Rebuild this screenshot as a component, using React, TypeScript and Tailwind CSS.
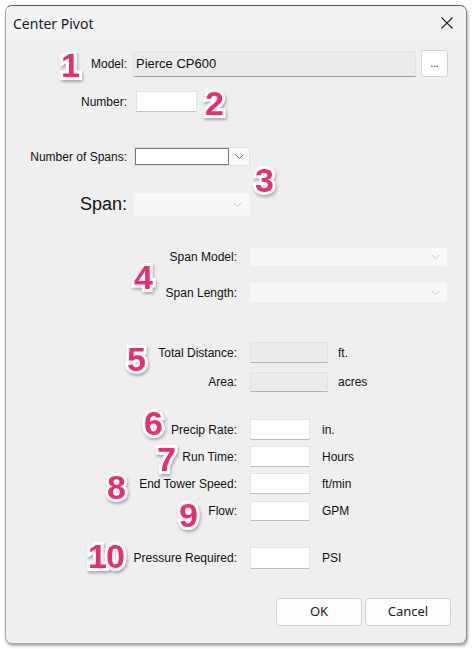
import React from "react";

const lbl = "font-['Liberation_Sans',Arial,sans-serif] text-[12px] text-[#111]";

function Chevron({ color }: { color: string }) {
  return (
    <svg width="9" height="6" viewBox="0 0 9 6" fill="none">
      <path d="M0.8 0.8 L4.5 4.5 L8.2 0.8" stroke={color} strokeWidth="1" />
    </svg>
  );
}

function Badge({ n, x, y }: { n: string; x: number; y: number }) {
  return (
    <span
      className="absolute font-['Liberation_Sans',Arial,sans-serif] font-bold text-[34px] leading-none text-[#ee2c69] [-webkit-text-stroke:6px_white] [paint-order:stroke_fill] [filter:drop-shadow(1px_2px_1.5px_rgba(0,0,0,0.3))] tracking-[-1px]"
      style={{ left: x, top: y }}
    >
      {n}
    </span>
  );
}

function Row2({ label, children, mt, h }: { label: string; children: React.ReactNode; mt: string; h: string }) {
  return (
    <div className={`flex items-center ${mt} ${h}`}>
      <div className={`w-[231px] text-right ${lbl}`}>{label}</div>
      {children}
    </div>
  );
}

function WhiteInput() {
  return <div className="ml-[13px] w-[60px] h-full bg-white border border-[#e4e4e4] border-b-[#bdbdbd]" />;
}

function Unit({ t }: { t: string }) {
  return <div className={`ml-[12px] ${lbl}`}>{t}</div>;
}

export default function App() {
  return (
    <div className="relative w-[474px] h-[649px] bg-white pt-[5px] pl-[5px] pr-[7px] pb-[5px]">
      <div className="h-full flex flex-col bg-[#efefef] rounded-[7px] border border-[#a9a9a9] border-t-[#555] border-r-[#8a8a8a] shadow-[1px_2px_3px_rgba(0,0,0,0.35)] overflow-hidden">
        {/* Title bar */}
        <div className="h-[34px] shrink-0 flex items-center justify-between pl-[7px] pr-[13px] bg-[#f2f3f5]">
          <span className="font-['Noto_Sans',sans-serif] text-[14px] text-[#1b1b1b]">Center Pivot</span>
          <svg width="12" height="12" viewBox="0 0 12 12" fill="none">
            <path d="M0.5 0.5 L11.5 11.5 M11.5 0.5 L0.5 11.5" stroke="#222" strokeWidth="1.1" />
          </svg>
        </div>

        {/* Body */}
        <div className="flex flex-col">
          {/* Model */}
          <div className="flex items-center mt-[10px] h-[27px]">
            <div className={`w-[121px] text-right ${lbl}`}>Model:</div>
            <div className="ml-[6px] w-[283px] h-[26px] flex items-center pl-[2px] bg-[#ebebeb] border border-[#e3e3e3] border-b-[#9d9d9d]">
              <span className={`${lbl} text-[13px]`}>Pierce CP600</span>
            </div>
            <div className="ml-[5px] w-[27px] h-[27px] bg-white border border-[#d6d6d6] rounded-[3px] flex items-center justify-center">
              <span className="font-['Noto_Sans',sans-serif] text-[10px] leading-none text-[#333] -mt-[2px]">...</span>
            </div>
          </div>

          {/* Number */}
          <div className="flex items-center mt-[14px] h-[21px]">
            <div className={`w-[121px] text-right ${lbl}`}>Number:</div>
            <div className="ml-[9px] w-[61px] h-full bg-white border border-[#e4e4e4] border-b-[#c6c6c6]" />
          </div>

          {/* Number of Spans */}
          <div className="flex items-center mt-[35px] h-[19px]">
            <div className={`w-[121px] text-right ${lbl}`}>Number of Spans:</div>
            <div className="ml-[7px] w-[116px] h-full flex bg-[#fbfbfb] border border-[#e2e2e2]">
              <div className="w-[94px] h-full bg-white border border-[#7a7a7a]" />
              <div className="flex-1 flex items-center justify-center">
                <Chevron color="#666" />
              </div>
            </div>
          </div>

          {/* Span */}
          <div className="flex items-center mt-[27px] h-[23px]">
            <div className="w-[121px] text-right font-['Liberation_Sans',Arial,sans-serif] text-[18px] text-[#111]">Span:</div>
            <div className="ml-[7px] w-[116px] h-full flex items-center justify-end pr-[8px] bg-[#f8f8f8]">
              <Chevron color="#c4c4c4" />
            </div>
          </div>

          {/* Span Model / Length */}
          <Row2 label="Span Model:" mt="mt-[32px]" h="h-[18px]">
            <div className="ml-[13px] w-[197px] h-full flex items-center justify-end pr-[7px] bg-[#f8f8f8]">
              <Chevron color="#c4c4c4" />
            </div>
          </Row2>
          <Row2 label="Span Length:" mt="mt-[17px]" h="h-[19px]">
            <div className="ml-[13px] w-[197px] h-full flex items-center justify-end pr-[7px] bg-[#f8f8f8]">
              <Chevron color="#c4c4c4" />
            </div>
          </Row2>

          {/* Total Distance / Area */}
          <Row2 label="Total Distance:" mt="mt-[40px]" h="h-[21px]">
            <div className="ml-[13px] w-[78px] h-full bg-[#ebebeb] border border-[#e2e2e2] border-b-[#b4b4b4]" />
            <div className={`ml-[10px] ${lbl}`}>ft.</div>
          </Row2>
          <Row2 label="Area:" mt="mt-[9px]" h="h-[20px]">
            <div className="ml-[13px] w-[78px] h-full bg-[#ebebeb] border border-[#e2e2e2] border-b-[#b4b4b4]" />
            <div className={`ml-[10px] ${lbl}`}>acres</div>
          </Row2>

          {/* Rates */}
          <Row2 label="Precip Rate:" mt="mt-[27px]" h="h-[21px]">
            <WhiteInput />
            <Unit t="in." />
          </Row2>
          <Row2 label="Run Time:" mt="mt-[6px]" h="h-[21px]">
            <WhiteInput />
            <Unit t="Hours" />
          </Row2>
          <Row2 label="End Tower Speed:" mt="mt-[6px]" h="h-[21px]">
            <WhiteInput />
            <Unit t="ft/min" />
          </Row2>
          <Row2 label="Flow:" mt="mt-[7px]" h="h-[20px]">
            <WhiteInput />
            <Unit t="GPM" />
          </Row2>
          <Row2 label="Pressure Required:" mt="mt-[26px]" h="h-[22px]">
            <WhiteInput />
            <Unit t="PSI" />
          </Row2>

          {/* Buttons */}
          <div className="flex justify-end gap-[3px] mt-[29px] pr-[15px]">
            <div className="w-[86px] h-[28px] bg-[#fdfdfd] border border-[#d3d3d3] rounded-[4px] flex items-center justify-center font-['Noto_Sans',sans-serif] text-[13px] text-[#1b1b1b]">OK</div>
            <div className="w-[86px] h-[28px] bg-[#fdfdfd] border border-[#d3d3d3] rounded-[4px] flex items-center justify-center font-['Noto_Sans',sans-serif] text-[13px] text-[#1b1b1b]">Cancel</div>
          </div>
        </div>
      </div>

      <Badge n="1" x={61} y={48} />
      <Badge n="2" x={205} y={86} />
      <Badge n="3" x={255} y={163} />
      <Badge n="4" x={134} y={260} />
      <Badge n="5" x={127} y={342} />
      <Badge n="6" x={144} y={406} />
      <Badge n="7" x={157} y={442} />
      <Badge n="8" x={107} y={470} />
      <Badge n="9" x={179} y={498} />
      <Badge n="10" x={88} y={539} />
    </div>
  );
}
